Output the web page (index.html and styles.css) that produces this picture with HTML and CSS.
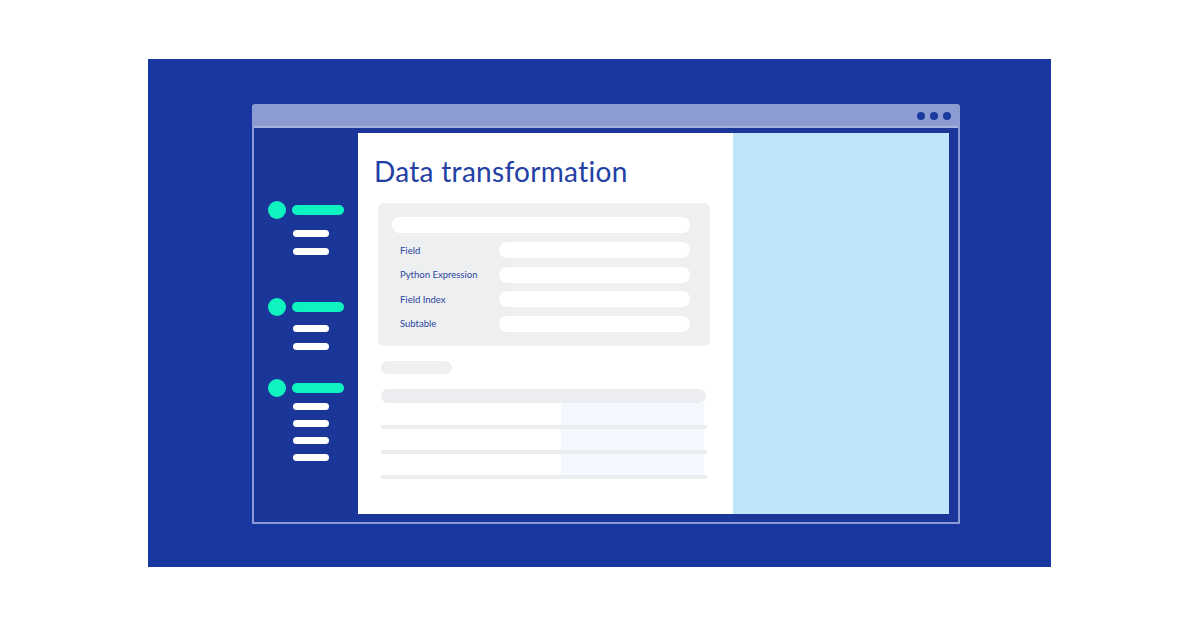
FILE: index.html
```html
<!DOCTYPE html>
<html>
<head>
<meta charset="utf-8">
<link rel="stylesheet" href="styles.css">
</head>
<body>
<div class="stage">
  <div class="window">
    <div class="titlebar">
      <span class="dot"></span><span class="dot"></span><span class="dot"></span>
    </div>
    <div class="body">
      <nav class="sidebar">
        <div class="group g1">
          <div class="head"><span class="circle"></span><span class="gbar"></span></div>
          <div class="lines l1"><span></span><span></span></div>
        </div>
        <div class="group g2">
          <div class="head"><span class="circle"></span><span class="gbar"></span></div>
          <div class="lines l2"><span></span><span></span></div>
        </div>
        <div class="group g3">
          <div class="head"><span class="circle"></span><span class="gbar"></span></div>
          <div class="lines l3"><span></span><span></span><span></span><span></span></div>
        </div>
      </nav>
      <main class="content">
        <h1 class="title">Data transformation</h1>
        <div class="card">
          <div class="topbar"></div>
          <div class="row"><span class="label">Field</span><span class="input"></span></div>
          <div class="row"><span class="label">Python Expression</span><span class="input"></span></div>
          <div class="row"><span class="label">Field Index</span><span class="input"></span></div>
          <div class="row"><span class="label">Subtable</span><span class="input"></span></div>
        </div>
        <div class="pill"></div>
        <div class="thead"></div>
        <div class="table">
          <div class="trow"><span class="c1"></span><span class="c2"></span></div>
          <div class="trow"><span class="c1"></span><span class="c2"></span></div>
          <div class="trow"><span class="c1"></span><span class="c2"></span></div>
        </div>
      </main>
      <aside class="preview"></aside>
    </div>
  </div>
</div>
</body>
</html>
```

FILE: styles.css
```css
html, body {
  margin: 0;
  padding: 0;
  background: #ffffff;
}
body {
  width: 1200px;
  height: 627px;
  box-sizing: border-box;
  padding: 59px 0 0 148px;
  font-family: Lato, "Open Sans", sans-serif;
}
.stage {
  width: 903px;
  height: 508px;
  background: #1937a0;
  box-sizing: border-box;
  padding: 45px 0 0 104px;
}
.window {
  width: 708px;
  height: 420px;
  box-sizing: border-box;
  border: 2px solid #8c9bd2;
  border-radius: 3px 3px 0 0;
  background: #1a3699;
  display: flex;
  flex-direction: column;
}
.titlebar {
  height: 20px;
  background: #8c9bd2;
  border-bottom: 2px solid #a6b2de;
  display: flex;
  align-items: center;
  justify-content: flex-end;
  gap: 5px;
  padding-right: 7px;
  flex-shrink: 0;
}
.dot {
  width: 8px;
  height: 8px;
  border-radius: 50%;
  background: #1b3a9e;
}
.body {
  flex: 1;
  display: flex;
  padding: 5px 9px 8px 0;
  min-height: 0;
}
.sidebar {
  width: 104px;
  flex-shrink: 0;
  box-sizing: border-box;
  padding-left: 14px;
  padding-top: 68px;
}
.head {
  display: flex;
  align-items: center;
  gap: 6px;
}
.circle {
  width: 18px;
  height: 18px;
  border-radius: 50%;
  background: #0ff3c0;
}
.gbar {
  width: 52px;
  height: 10px;
  border-radius: 5px;
  background: #0ff3c0;
}
.lines {
  display: flex;
  flex-direction: column;
  margin-left: 25px;
}
.lines span {
  width: 36px;
  height: 7px;
  border-radius: 4px;
  background: #ffffff;
}
.l1 { margin-top: 11px; gap: 11px; }
.l2 { margin-top: 9px; gap: 11px; }
.l3 { margin-top: 6px; gap: 10px; }
.g2 { margin-top: 43px; }
.g3 { margin-top: 29px; }

.content {
  width: 375px;
  flex-shrink: 0;
  background: #ffffff;
  box-sizing: border-box;
  padding: 20px 0 0 0;
}
.title {
  margin: 0 0 0 16px;
  font-weight: 400;
  font-size: 28px;
  line-height: 36px;
  color: #2340a4;
  letter-spacing: 0.3px;
}
.card {
  margin: 14px 0 0 20px;
  width: 332px;
  box-sizing: border-box;
  background: #eeeff1;
  border-radius: 6px;
  padding: 14px 20px 14px 14px;
}
.topbar {
  height: 16px;
  border-radius: 8px;
  background: #ffffff;
  margin-bottom: 9px;
}
.row {
  display: flex;
  align-items: center;
  height: 16px;
  margin-bottom: 8.5px;
}
.row:last-child { margin-bottom: 0; }
.label {
  width: 107px;
  box-sizing: border-box;
  padding-left: 8px;
  font-size: 9.5px;
  color: #2b44a0;
}
.input {
  flex: 1;
  height: 16px;
  border-radius: 8px;
  background: #ffffff;
}
.pill {
  margin: 15px 0 0 23px;
  width: 71px;
  height: 13px;
  border-radius: 7px;
  background: #eeeff1;
}
.thead {
  margin: 15px 0 0 23px;
  width: 325px;
  height: 14px;
  border-radius: 7px;
  background: #ecedf0;
}
.table {
  margin-left: 23px;
  width: 326px;
}
.trow {
  display: flex;
  height: 22px;
  border-bottom: 4px solid #ecedf0;
  border-radius: 0 0 2px 2px;
}
.trow:nth-child(2), .trow:nth-child(3) { height: 21px; }
.c1 { width: 180px; }
.c2 { width: 143px; background: #f5f8fe; }

.preview {
  flex: 1;
  background: #bfe5fd;
}
```
